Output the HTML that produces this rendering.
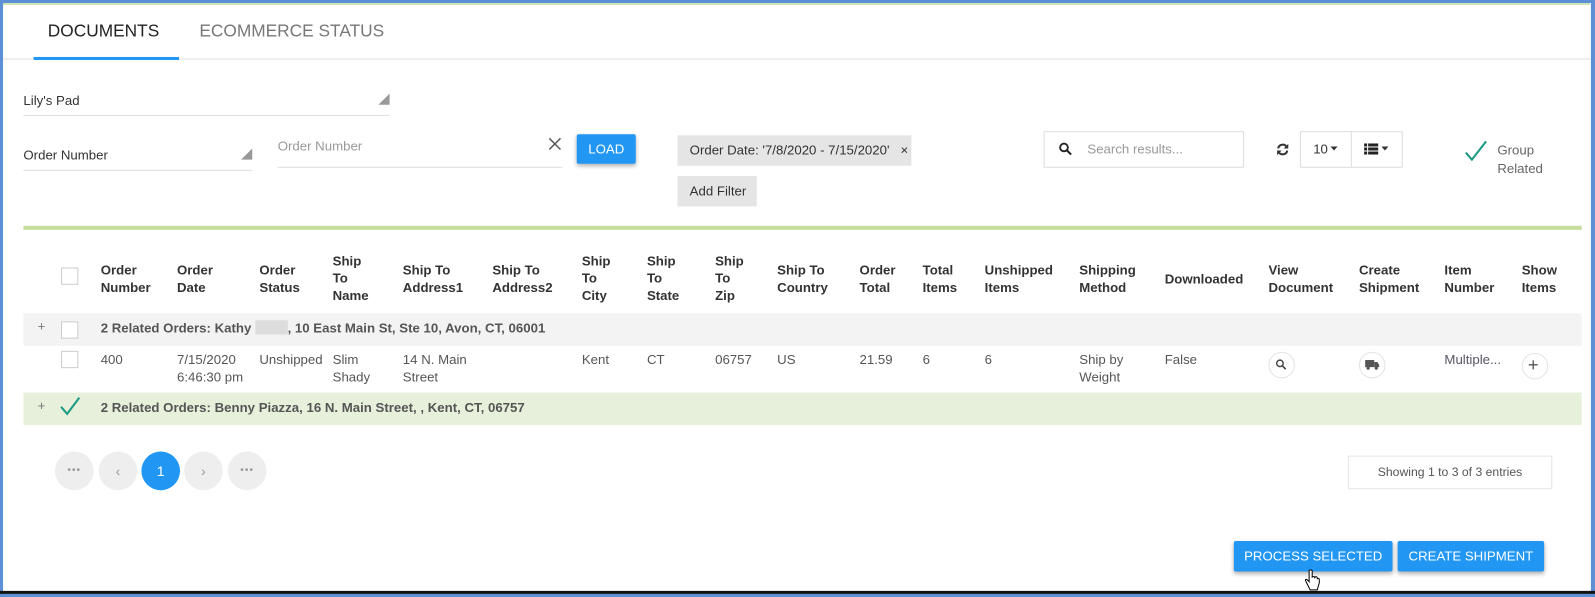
<!DOCTYPE html>
<html><head><meta charset="utf-8"><style>
html,body{margin:0;padding:0;background:#fff;overflow:hidden}
body{width:1595px;height:597px;position:relative}
#w{position:absolute;left:0;top:0;width:1568px;height:587px;transform:scale(1.0172,1.0170);transform-origin:0 0;font-family:"Liberation Sans",Arial,sans-serif;color:#555;font-size:13px}
.a{position:absolute}
.h{position:absolute;font-weight:bold;color:#333;font-size:13px;line-height:17px}
.d{position:absolute;font-size:13px;line-height:17px;color:#555}
.cb{position:absolute;width:15px;height:15px;border:1px solid #ccc;background:#fff}
.circ{position:absolute;width:38px;height:38px;border-radius:50%;background:#eee;color:#999;text-align:center;line-height:38px;font-size:14px}
.ib{position:absolute;width:24px;height:24px;border-radius:50%;border:1px solid #e3e3e3;background:#fff}
.btn{position:absolute;background:#2196f3;color:#fff;font-size:13px;text-align:center;line-height:30px;height:30px;box-shadow:0 2px 4px rgba(0,0,0,.3);border-radius:2px}
</style></head><body><div id="w">
<div class="a" style="left:0;top:0;width:1568px;height:587px;background:#fff"></div>
<div class="a" style="left:0;top:0;width:1568px;height:3px;background:#5b8fd6"></div>
<div class="a" style="left:3px;top:3px;width:1560px;height:2px;background:#cfe3b5"></div>
<div class="a" style="left:0;top:0;width:3px;height:587px;background:#5b8fd6"></div>
<div class="a" style="left:1564px;top:0;width:4px;height:587px;background:#5b8fd6"></div>
<div class="a" style="left:0;top:581px;width:1568px;height:3px;background:#111"></div>
<div class="a" style="left:0;top:584px;width:1568px;height:3px;background:#5b8fd6"></div>

<div class="a" style="left:47px;top:21px;font-size:17px;color:#222">DOCUMENTS</div>
<div class="a" style="left:196px;top:21px;font-size:17px;color:#777">ECOMMERCE STATUS</div>
<div class="a" style="left:3px;top:57px;width:1561px;height:2px;background:#eee"></div>
<div class="a" style="left:33px;top:56px;width:143px;height:3px;background:#2196f3"></div>

<div class="a" style="left:23px;top:91px;color:#333">Lily's Pad</div>
<div class="a" style="left:372px;top:92px;width:0;height:0;border-left:11px solid transparent;border-bottom:11px solid #999"></div>
<div class="a" style="left:23px;top:113px;width:360px;height:1px;background:#ddd"></div>

<div class="a" style="left:23px;top:145px;color:#333">Order Number</div>
<div class="a" style="left:237px;top:146px;width:0;height:0;border-left:11px solid transparent;border-bottom:11px solid #999"></div>
<div class="a" style="left:23px;top:167px;width:225px;height:1px;background:#ddd"></div>

<div class="a" style="left:273px;top:136px;color:#999">Order Number</div>
<svg class="a" style="left:539px;top:135px" width="13" height="13" viewBox="0 0 13 13"><path d="M1 1 L12 12 M12 1 L1 12" stroke="#555" stroke-width="1.4"/></svg>
<div class="a" style="left:273px;top:164px;width:280px;height:1px;background:#ddd"></div>
<div class="btn" style="left:567px;top:132px;width:58px;height:29px;line-height:29px;font-size:13px">LOAD</div>

<div class="a" style="left:666px;top:133px;width:230px;height:30px;background:#e5e5e5"></div>
<div class="a" style="left:678px;top:140px;color:#333">Order Date: '7/8/2020 - 7/15/2020'&nbsp;&nbsp;&nbsp;×</div>
<div class="a" style="left:666px;top:173px;width:78px;height:30px;background:#e5e5e5"></div>
<div class="a" style="left:678px;top:180px;color:#333">Add Filter</div>

<div class="a" style="left:1026px;top:129px;width:195px;height:34px;border:1px solid #ddd"></div>
<svg class="a" style="left:1041px;top:140px" width="13" height="13" viewBox="0 0 13 13"><circle cx="5" cy="5" r="3.8" fill="none" stroke="#222" stroke-width="1.8"/><path d="M8 8 L12 12" stroke="#222" stroke-width="2"/></svg>
<div class="a" style="left:1069px;top:139px;color:#999">Search results...</div>
<svg class="a" style="left:1254px;top:140px" width="14" height="14" viewBox="0 0 14 14"><path d="M2.5 6 A4.6 4.6 0 0 1 11 4.5" fill="none" stroke="#333" stroke-width="2"/><path d="M11.5 8 A4.6 4.6 0 0 1 3 9.5" fill="none" stroke="#333" stroke-width="2"/><path d="M12.5 1.5 L12.5 6 L8 6Z" fill="#333"/><path d="M1.5 12.5 L1.5 8 L6 8Z" fill="#333"/></svg>
<div class="a" style="left:1278px;top:129px;width:99px;height:34px;border:1px solid #ddd"></div>
<div class="a" style="left:1328px;top:129px;width:1px;height:35px;background:#ddd"></div>
<div class="a" style="left:1291px;top:139px;color:#333">10</div>
<svg class="a" style="left:1308px;top:144px" width="7" height="4" viewBox="0 0 7 4"><path d="M0 0H7L3.5 4Z" fill="#333"/></svg>
<svg class="a" style="left:1341px;top:141px" width="14" height="11" viewBox="0 0 14 11"><rect x="0" y="0" width="3" height="3" fill="#222"/><rect x="4" y="0" width="10" height="3" fill="#222"/><rect x="0" y="4" width="3" height="3" fill="#222"/><rect x="4" y="4" width="10" height="3" fill="#222"/><rect x="0" y="8" width="3" height="3" fill="#222"/><rect x="4" y="8" width="10" height="3" fill="#222"/></svg>
<svg class="a" style="left:1358px;top:144px" width="7" height="4" viewBox="0 0 7 4"><path d="M0 0H7L3.5 4Z" fill="#333"/></svg>
<svg class="a" style="left:1439px;top:137px" width="24" height="22" viewBox="0 0 24 22"><path d="M2 13 L8 20 L22 2" fill="none" stroke="#1a9a82" stroke-width="2"/></svg>
<div class="a" style="left:1472px;top:139px;line-height:18px;color:#666">Group<br>Related</div>

<div class="a" style="left:23px;top:222px;width:1532px;height:4px;background:#c5de9e"></div>

<div class="cb" style="left:60px;top:263px"></div>
<div class="h" style="left:99px;top:257px">Order<br>Number</div>
<div class="h" style="left:174px;top:257px">Order<br>Date</div>
<div class="h" style="left:255px;top:257px">Order<br>Status</div>
<div class="h" style="left:327px;top:248px">Ship<br>To<br>Name</div>
<div class="h" style="left:396px;top:257px">Ship To<br>Address1</div>
<div class="h" style="left:484px;top:257px">Ship To<br>Address2</div>
<div class="h" style="left:572px;top:248px">Ship<br>To<br>City</div>
<div class="h" style="left:636px;top:248px">Ship<br>To<br>State</div>
<div class="h" style="left:703px;top:248px">Ship<br>To<br>Zip</div>
<div class="h" style="left:764px;top:257px">Ship To<br>Country</div>
<div class="h" style="left:845px;top:257px">Order<br>Total</div>
<div class="h" style="left:907px;top:257px">Total<br>Items</div>
<div class="h" style="left:968px;top:257px">Unshipped<br>Items</div>
<div class="h" style="left:1061px;top:257px">Shipping<br>Method</div>
<div class="h" style="left:1145px;top:266px">Downloaded</div>
<div class="h" style="left:1247px;top:257px">View<br>Document</div>
<div class="h" style="left:1336px;top:257px">Create<br>Shipment</div>
<div class="h" style="left:1420px;top:257px">Item<br>Number</div>
<div class="h" style="left:1496px;top:257px">Show<br>Items</div>

<div class="a" style="left:23px;top:308px;width:1532px;height:32px;background:#f3f3f3"></div>
<div class="a" style="left:37px;top:313px;color:#777">+</div>
<div class="cb" style="left:60px;top:316px"></div>
<div class="a" style="left:99px;top:315px;font-weight:bold;color:#555">2 Related Orders: Kathy <span style="display:inline-block;width:32px;height:14px;background:#ddd;vertical-align:-2px"></span>, 10 East Main St, Ste 10, Avon, CT, 06001</div>

<div class="cb" style="left:60px;top:345px"></div>
<div class="d" style="left:99px;top:345px">400</div>
<div class="d" style="left:174px;top:345px">7/15/2020<br>6:46:30 pm</div>
<div class="d" style="left:255px;top:345px">Unshipped</div>
<div class="d" style="left:327px;top:345px">Slim<br>Shady</div>
<div class="d" style="left:396px;top:345px">14 N. Main<br>Street</div>
<div class="d" style="left:572px;top:345px">Kent</div>
<div class="d" style="left:636px;top:345px">CT</div>
<div class="d" style="left:703px;top:345px">06757</div>
<div class="d" style="left:764px;top:345px">US</div>
<div class="d" style="left:845px;top:345px">21.59</div>
<div class="d" style="left:907px;top:345px">6</div>
<div class="d" style="left:968px;top:345px">6</div>
<div class="d" style="left:1061px;top:345px">Ship by<br>Weight</div>
<div class="d" style="left:1145px;top:345px">False</div>
<div class="ib" style="left:1247px;top:346px"></div>
<svg class="a" style="left:1254px;top:353px" width="11" height="11" viewBox="0 0 11 11"><circle cx="4.3" cy="4.3" r="3.2" fill="none" stroke="#444" stroke-width="1.4"/><path d="M6.8 6.8 L10 10" stroke="#444" stroke-width="1.6"/></svg>
<div class="ib" style="left:1336px;top:346px"></div>
<svg class="a" style="left:1342px;top:353px" width="14" height="11" viewBox="0 0 14 11"><rect x="0" y="1" width="9" height="7" fill="#555"/><path d="M9 3 H12 L14 6 V8 H9Z" fill="#555"/><circle cx="3" cy="9" r="1.6" fill="#555"/><circle cx="11" cy="9" r="1.6" fill="#555"/></svg>
<div class="d" style="left:1420px;top:345px;color:#556">Multiple...</div>
<div class="ib" style="left:1496px;top:347px"></div>
<div class="a" style="left:1502px;top:348px;font-size:18px;color:#555;line-height:22px">+</div>

<div class="a" style="left:23px;top:386px;width:1532px;height:32px;background:#e6f0da"></div>
<div class="a" style="left:37px;top:391px;color:#777">+</div>
<svg class="a" style="left:58px;top:389px" width="22" height="20" viewBox="0 0 22 20"><path d="M2 11 L8 18 L20 2" fill="none" stroke="#1a9a82" stroke-width="2"/></svg>
<div class="a" style="left:99px;top:393px;font-weight:bold;color:#555">2 Related Orders: Benny Piazza, 16 N. Main Street, , Kent, CT, 06757</div>

<div class="circ" style="left:54px;top:444px;font-size:10px;letter-spacing:1px">•••</div>
<div class="circ" style="left:97px;top:444px">‹</div>
<div class="circ" style="left:139px;top:444px;background:#2196f3;color:#fff;font-size:14px">1</div>
<div class="circ" style="left:181px;top:444px">›</div>
<div class="circ" style="left:224px;top:444px;font-size:10px;letter-spacing:1px">•••</div>

<div class="a" style="left:1325px;top:448px;width:199px;height:31px;border:1px solid #e5e5e5;text-align:center;line-height:31px;font-size:12px;color:#555">Showing 1 to 3 of 3 entries</div>

<div class="btn" style="left:1213px;top:532px;width:156px">PROCESS SELECTED</div>
<div class="btn" style="left:1374px;top:532px;width:144px">CREATE SHIPMENT</div>
<svg class="a" style="left:1282px;top:560px" width="16" height="22" viewBox="0 0 16 22"><path d="M5 1 V12 L3 10 Q1 9 1.5 11 L6 20 H13 L15 13 V10 Q15 8 13 9 V8 Q12 6 10.5 8 Q10 6 8 7.5 V1 Q6.5 0 5 1Z" fill="#fff" stroke="#000" stroke-width="1"/></svg>
</div></body></html>
